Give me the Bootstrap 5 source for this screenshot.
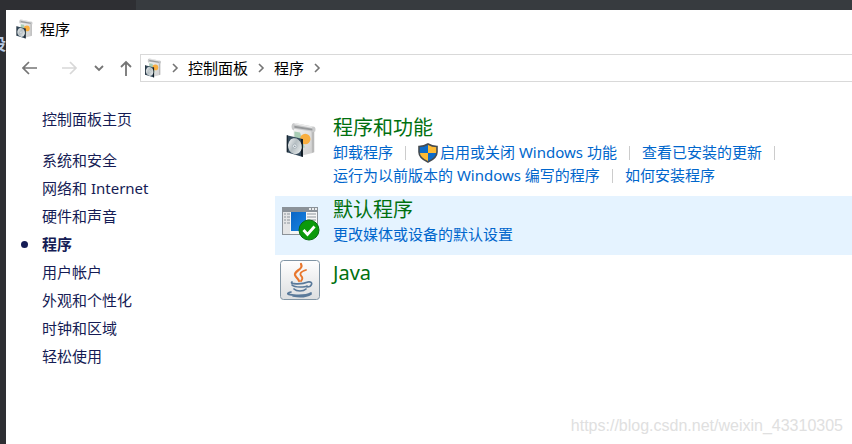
<!DOCTYPE html>
<html lang="zh-CN">
<head>
<meta charset="utf-8">
<meta name="viewport" content="width=device-width, initial-scale=1">
<title>程序</title>
<link href="https://cdn.jsdelivr.net/npm/bootstrap@5.3.0/dist/css/bootstrap.min.css" rel="stylesheet">
<style>
body{font:15px/28px "Noto Sans","Noto Sans CJK SC",sans-serif;color:#000;background:#fff}
a{text-decoration:none;color:inherit}
a:hover{text-decoration:underline}
svg{display:block;flex:none}
.desk-top{height:10px;background:#373b3f}
.desk-top div{width:136px;background:#2e2f33}
.desk-left{width:6px;padding-top:20px;background:#2e2f33;color:#b9cbe4;font-size:16px;font-weight:700;direction:rtl;overflow:hidden;white-space:nowrap}
.window{min-width:0}
.title-bar{height:38px;padding-left:10px;gap:7px}
.nav-bar{height:40px;padding-left:16px}
.tool{border:0;background:none;padding:0;color:#757575}
.tool:disabled{color:#d8d8d8}
.address{height:28px;border:1px solid #d9d9d9;border-right:0;padding-left:3px;color:#000}
.crumb-sep{color:#757575}
.side{width:269px;padding:17px 0 0 36px;color:#151c55}
.side ul{margin-top:13px}
.current{font-weight:700;position:relative}
.current::before{content:"";position:absolute;left:-21px;top:11px;width:7px;height:7px;border-radius:50%;background:#151c55}
.groups{padding-top:26px}
.group{padding:1px 0 9px 5px;gap:13px}
.group.active-row{background:#e5f3ff}
.group h2{font-size:20px;line-height:26px;font-weight:400;color:#00700f;margin:0}
.tasks{line-height:23px;color:#0066cc}
.tasks li{display:flex;align-items:center}
.tasks .split::after{content:"";width:1px;height:14px;background:#ccc;margin:0 12px}
.shield{margin-right:2px}
.java{padding-top:4px}
.java h2{line-height:28px}
.watermark{font:16px/20px "Liberation Sans",Arial,sans-serif;color:#e0e0e0;padding:0 9px 8px 0}
</style>
<script src="https://cdn.jsdelivr.net/npm/bootstrap@5.3.0/dist/js/bootstrap.bundle.min.js"></script>
</head>
<body class="d-flex flex-column min-vh-100">
<svg width="0" height="0" class="position-absolute" aria-hidden="true">
<defs>
<linearGradient id="boxg" x1="0" x2="1" y2="1"><stop stop-color="#f4f4f4"/><stop offset="1" stop-color="#cfcfcf"/></linearGradient>
<linearGradient id="disc" x1="0" x2="1" y2="1"><stop stop-color="#f5f7f8"/><stop offset=".45" stop-color="#b5bec2"/><stop offset="1" stop-color="#f1f4f4"/></linearGradient>
<linearGradient id="scr" x2="1" y2="1"><stop stop-color="#0b65c4"/><stop offset="1" stop-color="#1684e4"/></linearGradient>
<linearGradient id="jbg" y2="1" x2="0"><stop stop-color="#fff"/><stop offset="1" stop-color="#dcdee0"/></linearGradient>
<symbol id="programs" viewBox="0 0 32 38">
<path d="M8 5 27 8v25l-12 3-7-3z" fill="url(#boxg)"/>
<path d="M27 8l3-2v26l-3 1z" fill="#b9b9b9"/>
<path d="M9 10l6 1 5 16-11 2z" fill="#a9cdb5"/>
<circle cx="20.500" cy="18" r="5.500" fill="#f9ae3f"/>
<path d="M6 5q0-4 3-4l21 4q2 1 1 5l-4 1v-1L9 7l-1 2q-2-1-2-4z" fill="#c9cacb"/>
<path d="M9 4l19 3v2L9 6z" fill="#96989a"/>
<path d="M8 2l2-1 19 4-2 1z" fill="#eee"/>
<path d="M1 14l17 4v19L1 32z" fill="#34495a"/>
<path d="M1 14l1 0v18l-1 0zM16 18l2 0v19l-2-1z" fill="#101b24"/>
<ellipse cx="9.500" cy="25.500" rx="7.200" ry="8.500" transform="rotate(-12 10 25)" fill="url(#disc)"/>
<circle cx="9.500" cy="25.500" r="2.200" fill="#f4f7f8" stroke="#9aa7ae" stroke-width=".8"/>
<circle cx="9.500" cy="25.500" r=".8" fill="#6f808b"/>
</symbol>
<symbol id="chev" viewBox="0 0 8 10"><path d="M2 1l4 4-4 4" fill="none" stroke="currentColor" stroke-width="1.6"/></symbol>
</defs>
</svg>
<div class="desk-top d-flex"><div></div></div>
<div class="d-flex flex-grow-1">
<div class="desk-left flex-shrink-0" aria-hidden="true">设</div>
<main class="window flex-grow-1 d-flex flex-column">
<header class="title-bar d-flex align-items-center"><svg width="17" height="20"><use href="#programs"/></svg><span>程序</span></header>
<nav class="nav-bar d-flex align-items-center" aria-label="导航">
<button class="tool" aria-label="后退"><svg width="16" height="14" fill="none" stroke="currentColor" stroke-width="1.7"><path d="M15 7H1M7 1L1 7l6 6"/></svg></button>
<button class="tool ms-4" aria-label="前进" disabled><svg width="16" height="14" fill="none" stroke="currentColor" stroke-width="1.7"><path d="M0 7h14M8 1l6 6-6 6"/></svg></button>
<button class="tool ms-3" aria-label="最近位置"><svg width="10" height="8" fill="none" stroke="currentColor" stroke-width="1.8"><path d="M1 2l4 4 4-4"/></svg></button>
<button class="tool ms-3" aria-label="上移"><svg width="12" height="16" fill="none" stroke="currentColor" stroke-width="1.8"><path d="M6 16V2M1 7l5-5 5 5"/></svg></button>
<div class="address d-flex align-items-center flex-grow-1 ms-2">
<svg width="18" height="20"><use href="#programs"/></svg>
<svg class="crumb-sep mx-2" width="10" height="10"><use href="#chev"/></svg>
<a href="#">控制面板</a>
<svg class="crumb-sep mx-2" width="10" height="10"><use href="#chev"/></svg>
<a href="#">程序</a>
<svg class="crumb-sep mx-2" width="10" height="10"><use href="#chev"/></svg>
</div>
</nav>
<div class="d-flex">
<aside class="side flex-shrink-0">
<a href="#">控制面板主页</a>
<ul class="list-unstyled mb-0">
<li><a href="#">系统和安全</a></li>
<li><a href="#">网络和 Internet</a></li>
<li><a href="#">硬件和声音</a></li>
<li class="current">程序</li>
<li><a href="#">用户帐户</a></li>
<li><a href="#">外观和个性化</a></li>
<li><a href="#">时钟和区域</a></li>
<li><a href="#">轻松使用</a></li>
</ul>
</aside>
<div class="groups flex-grow-1">
<section class="group d-flex">
<svg width="40" height="46"><use href="#programs" x="5" y="7" width="32" height="36"/></svg>
<div><h2><a href="#">程序和功能</a></h2>
<ul class="tasks list-unstyled d-flex flex-wrap mb-0">
<li class="split"><a href="#">卸载程序</a></li>
<li class="split"><svg width="20" height="20" viewBox="0 0 20 20" class="shield"><clipPath id="sh"><path d="M10 1Q6 3.500 1 3.500V9q0 6 9 10 9-4 9-10V3.500Q14 3.500 10 1z"/></clipPath><g clip-path="url(#sh)"><path fill="#0c6bc9" d="M0 0h10v10H0zM10 10h10v10H10z"/><path fill="#fdbb35" d="M10 0h10v10H10zM0 10h10v10H0z"/></g><path d="M10 1Q6 3.500 1 3.500V9q0 6 9 10 9-4 9-10V3.500Q14 3.500 10 1z" fill="none" stroke="#454b50" stroke-width="1.600"/></svg><a href="#">启用或关闭 Windows 功能</a></li>
<li class="split"><a href="#">查看已安装的更新</a></li>
<li class="split"><a href="#">运行为以前版本的 Windows 编写的程序</a></li>
<li><a href="#">如何安装程序</a></li>
</ul></div>
</section>
<section class="group active-row d-flex">
<svg width="40" height="49" viewBox="0 0 40 49"><path d="M2 10h36v28H2z" fill="#8b9299"/><path d="M3 15h34v22H3z" fill="#f6f6f6"/><path d="M3 15h7v22H3z" fill="#e4e5e6"/><path d="M29 11h2v2h-2zM32 11h2v2h-2zM35 11h2v2h-2z" fill="#e9ebed"/><path d="M4 17h2M7 17h3M4 20h2M7 20h3M4 23h2M7 23h3M4 26h2M7 26h3M27 17h9M27 20h9M27 23h9" stroke="#8d959c"/><path d="M11 15h15v19H11z" fill="url(#scr)"/><circle cx="29" cy="33" r="10" fill="#0b9a0b" stroke="#096d12"/><path d="M23.500 33l4 4.500 7-8" fill="none" stroke="#fff" stroke-width="2.800"/></svg>
<div><h2><a href="#">默认程序</a></h2>
<ul class="tasks list-unstyled mb-0"><li><a href="#">更改媒体或设备的默认设置</a></li></ul></div>
</section>
<section class="group java d-flex">
<svg width="40" height="42" viewBox="0 -1 40 42"><rect x=".5" y=".5" width="39" height="39" rx="3" fill="url(#jbg)" stroke="#8195a5"/><g fill="none" stroke-linecap="round"><path d="M21 4c3 6-7 6-6 11 1 3 3 3 4 6" stroke="#e8762c" stroke-width="2.200"/><path d="M26 10c-6 2-7 4-4 7 1 2 0 3-1 4" stroke="#e8762c" stroke-width="1.800"/><path d="M12 22c-3 2 9 3 16 0M12 25q2 2 8 2t7-1M14 29q2 2 6 2t6-2M28 22c6-1 4 5-1 5M11 32c-12 3 13 5 20 1M13 36q12 2 18-2" stroke="#59799a" stroke-width="1.700"/></g></svg>
<h2><a href="#">Java</a></h2>
</section>
</div>
</div>
<div class="watermark text-end mt-auto">https://blog.csdn.net/weixin_43310305</div>
</main>
</div>
</body>
</html>
